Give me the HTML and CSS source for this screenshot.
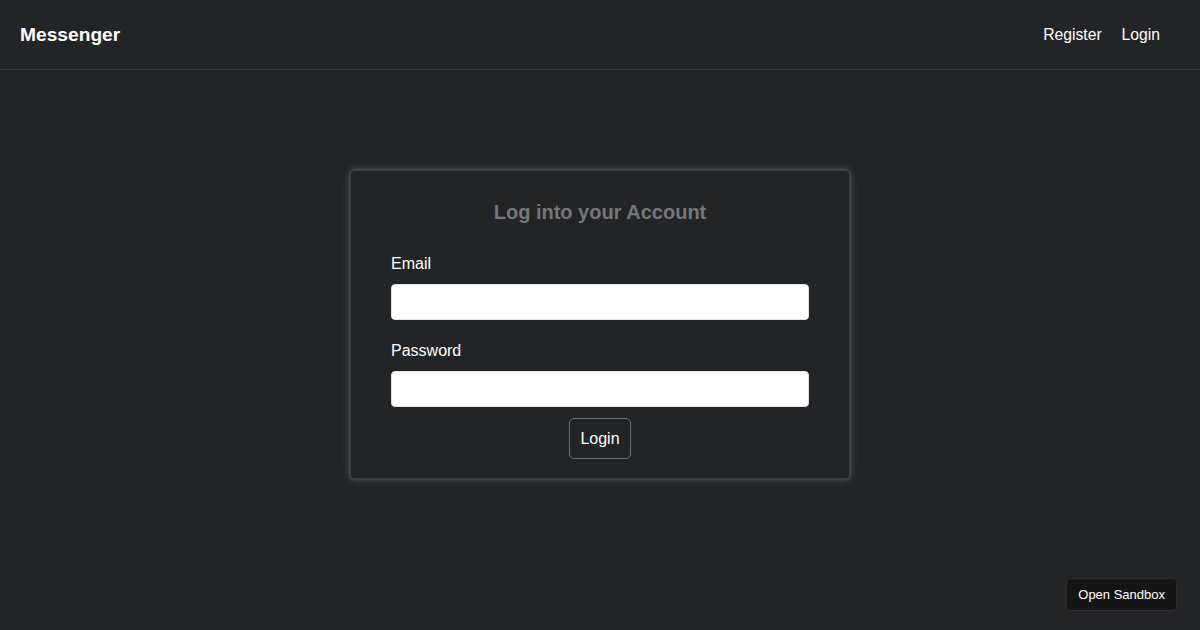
FILE: index.html
```html
<!DOCTYPE html>
<html>
<head>
<meta charset="utf-8">
<link rel="stylesheet" href="styles.css">
</head>
<body>
<header class="topbar">
  <div class="brand">Messenger</div>
  <nav class="nav">
    <a class="nav-link" href="#">Register</a>
    <a class="nav-link" href="#">Login</a>
  </nav>
</header>
<main class="main">
  <form class="card">
    <h2 class="card-title">Log into your Account</h2>
    <label class="label" for="email">Email</label>
    <input class="input" id="email" type="email">
    <label class="label label-second" for="password">Password</label>
    <input class="input" id="password" type="password">
    <div class="actions">
      <button class="btn" type="button">Login</button>
    </div>
  </form>
</main>
<button class="sandbox" type="button">Open Sandbox</button>
</body>
</html>
```
FILE: styles.css
```css
* { box-sizing: border-box; }
html, body { margin: 0; padding: 0; }
body {
  width: 1200px;
  height: 630px;
  background: #232426;
  color: #ffffff;
  font-family: "Liberation Sans", Arial, sans-serif;
  overflow: hidden;
  position: relative;
}
.topbar {
  height: 70px;
  border-bottom: 1px solid #34363a;
  display: flex;
  align-items: center;
  justify-content: space-between;
  padding: 0 40px 0 20px;
}
.brand {
  font-size: 19.2px;
  font-weight: bold;
}
.nav {
  display: flex;
  gap: 20px;
}
.nav-link {
  color: #ffffff;
  text-decoration: none;
  font-size: 15.7px;
}
.main {
  display: flex;
  justify-content: center;
  padding-top: 100px;
}
.card {
  width: 500px;
  background: #232426;
  border: 1px solid #3c3e42;
  border-radius: 4px;
  box-shadow: 0 0 3px rgba(255, 255, 255, 0.2), 0 0 10px rgba(255, 255, 255, 0.2);
  padding: 29px 40px 19px;
  display: flex;
  flex-direction: column;
}
.card-title {
  margin: 0 0 28px;
  text-align: center;
  font-size: 20px;
  line-height: 24px;
  font-weight: bold;
  color: #76777a;
}
.label {
  font-size: 16px;
  line-height: 24px;
  margin-bottom: 8px;
}
.label-second { margin-top: 19px; }
.input {
  width: 100%;
  height: 36px;
  border: 1px solid #dee2e6;
  border-radius: 4px;
  background: #ffffff;
}
.actions {
  display: flex;
  justify-content: center;
  margin-top: 11px;
}
.btn {
  height: 41px;
  padding: 0 10px;
  background: transparent;
  border: 1px solid #6d6f73;
  border-radius: 5px;
  color: #ffffff;
  font-family: "Liberation Sans", Arial, sans-serif;
  font-size: 16px;
}
.sandbox {
  position: absolute;
  right: 23px;
  bottom: 19px;
  height: 33px;
  padding: 0 11px;
  background: #151516;
  border: 1px solid #2c2d30;
  border-radius: 4px;
  color: #ffffff;
  font-family: "Liberation Sans", Arial, sans-serif;
  font-size: 13px;
}
```
